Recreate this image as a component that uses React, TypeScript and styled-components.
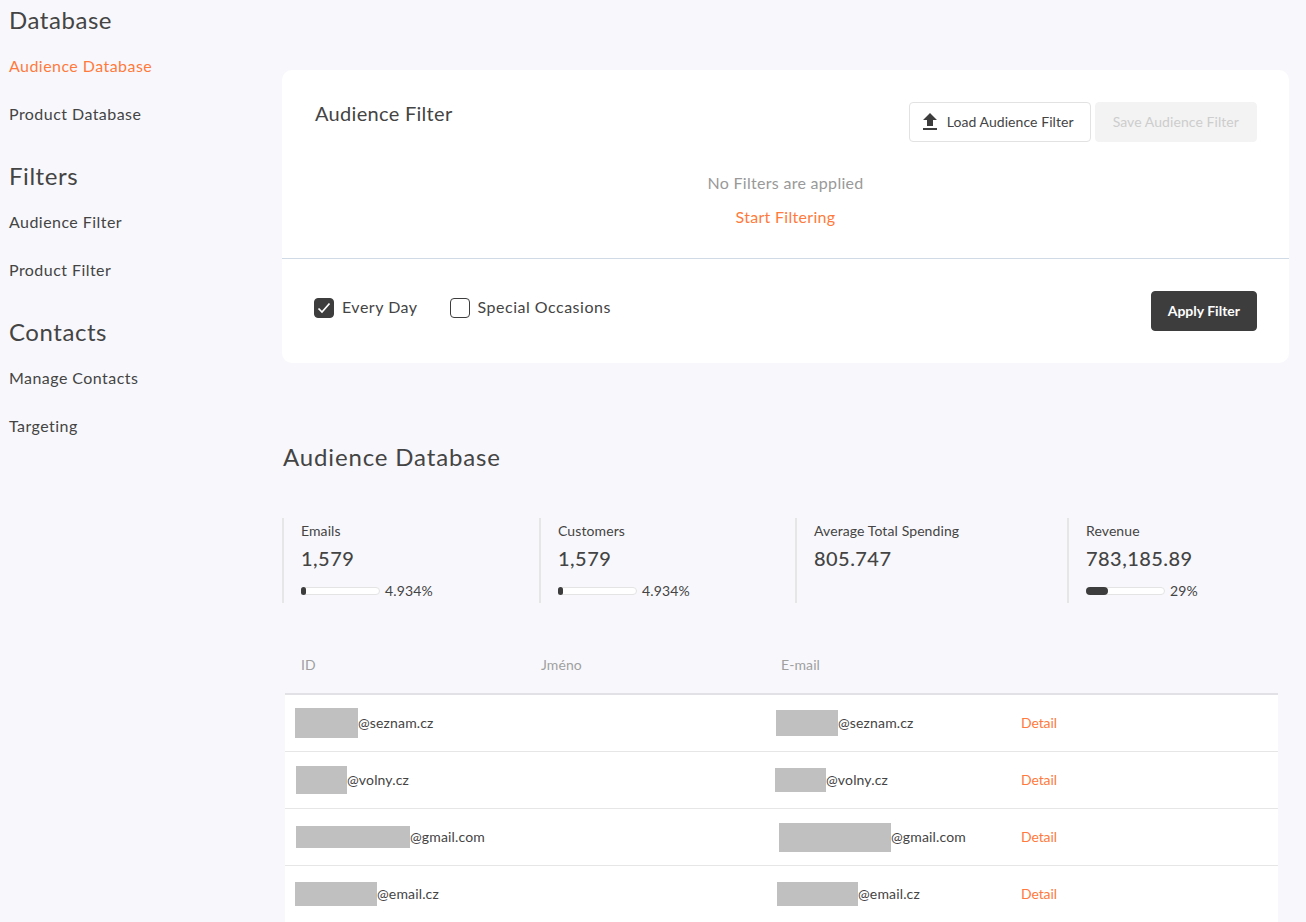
import React from "react";
import styled, { createGlobalStyle } from "styled-components";
import { MdFileUpload } from "react-icons/md";

const GlobalStyle = createGlobalStyle`
  html, body {
    margin: 0;
    padding: 0;
    background: #f8f8fc;
    overflow: hidden;
  }
  body {
    font-family: "Lato", "Open Sans", sans-serif;
    color: #444;
  }
`;

const orange = "#ff7a3c";

const Shell = styled.div`
  display: grid;
  grid-template-columns: 282px 1fr;
  height: 922px;
  overflow: hidden;
`;

const Sidebar = styled.nav`
  padding-left: 9px;
  display: flex;
  flex-direction: column;
  gap: 18px;
`;

const NavGroup = styled.div`
  display: flex;
  flex-direction: column;
`;

const NavTitle = styled.h3`
  margin: 0;
  height: 42px;
  line-height: 40px;
  font-size: 24px;
  font-weight: 400;
  letter-spacing: 0.55px;
  color: #444;
`;

const NavItem = styled.a<{ $active?: boolean }>`
  height: 48px;
  line-height: 48px;
  font-size: 16px;
  letter-spacing: 0.45px;
  color: ${({ $active }) => ($active ? orange : "#444")};
`;

const Main = styled.main`
  padding: 70px 17px 0 0;
`;

const Card = styled.section`
  background: #fff;
  border-radius: 10px;
`;

const CardTop = styled.div`
  padding: 32px 32px 29px;
  border-bottom: 1px solid #cfdae6;
`;

const CardHeader = styled.div`
  display: flex;
  justify-content: space-between;
  align-items: flex-start;
`;

const CardTitle = styled.h2`
  margin: 0 0 0 1px;
  font-size: 20px;
  line-height: 22px;
  font-weight: 400;
  letter-spacing: 0.3px;
  color: #444;
`;

const ButtonRow = styled.div`
  display: flex;
  gap: 4px;
`;

const Button = styled.button<{ $kind?: "outline" | "disabled" | "dark" }>`
  display: flex;
  align-items: center;
  justify-content: center;
  gap: 5px;
  height: 40px;
  box-sizing: border-box;
  border-radius: 4px;
  font-family: inherit;
  font-size: 14px;
  letter-spacing: 0.07px;
  padding: 0 16px 2px;
  border: 1px solid
    ${({ $kind }) =>
      $kind === "outline" ? "#e2e2e2" : $kind === "dark" ? "#3d3d3d" : "#f3f3f3"};
  background: ${({ $kind }) =>
    $kind === "outline" ? "#fff" : $kind === "dark" ? "#3d3d3d" : "#f3f3f3"};
  color: ${({ $kind }) =>
    $kind === "outline" ? "#444" : $kind === "dark" ? "#fff" : "#cdcdcd"};
  font-weight: ${({ $kind }) => ($kind === "dark" ? 700 : 400)};
`;

const IconButton = styled(Button)`
  padding-left: 8px;

  svg {
    margin-top: 2px;
  }
`;

const SaveButton = styled(Button)`
  padding: 0 17px 2px;
`;

const ApplyButton = styled(Button)`
  letter-spacing: 0;
`;

const EmptyState = styled.div`
  margin-top: 29px;
  display: flex;
  flex-direction: column;
  align-items: center;
  gap: 10px;
  font-size: 16px;
  line-height: 24px;
  letter-spacing: 0.3px;
`;

const EmptyText = styled.span`
  color: #999;
`;

const EmptyLink = styled.a`
  color: ${orange};
`;

const CardFooter = styled.div`
  display: flex;
  align-items: flex-start;
  justify-content: space-between;
  padding: 32px;
`;

const Checks = styled.div`
  display: flex;
  gap: 32px;
  padding-top: 6px;
`;

const CheckLabel = styled.label`
  display: flex;
  align-items: center;
  gap: 8px;
  font-size: 16px;
  letter-spacing: 0.5px;
  color: #444;
`;

const CheckText = styled.span`
  margin-bottom: 2px;
`;

const CheckBox = styled.span<{ $checked?: boolean }>`
  display: flex;
  align-items: center;
  justify-content: center;
  width: 20px;
  height: 20px;
  box-sizing: border-box;
  border-radius: 4px;
  border: 1px solid #3d3d3d;
  background: ${({ $checked }) => ($checked ? "#3d3d3d" : "#fff")};
`;

const SectionTitle = styled.h2`
  margin: 79px 0 46px 1px;
  font-size: 24px;
  line-height: 30px;
  font-weight: 400;
  letter-spacing: 0.85px;
  color: #444;
`;

const Stats = styled.div`
  display: grid;
  grid-template-columns: 257px 256px 272px 1fr;
`;

const Stat = styled.div`
  height: 85px;
  box-sizing: border-box;
  border-left: 2px solid #e6e6e6;
  padding: 4px 0 0 17px;
`;

const StatLabel = styled.div`
  font-size: 14px;
  line-height: 18px;
  letter-spacing: 0.1px;
  color: #444;
`;

const StatValue = styled.div`
  margin-top: 5px;
  font-size: 20px;
  line-height: 26px;
  font-weight: 500;
  letter-spacing: 0.45px;
  color: #444;
`;

const ProgressRow = styled.div`
  margin-top: 11px;
  display: flex;
  align-items: center;
  gap: 5px;
  font-size: 14px;
  line-height: 18px;
  letter-spacing: 0.12px;
  color: #444;
`;

const Track = styled.div`
  width: 79px;
  height: 8px;
  box-sizing: border-box;
  background: #fff;
  border: 1px solid #e4e4e4;
  border-radius: 4px;
`;

const Fill = styled.div`
  height: 8px;
  margin: -1px 0 0 -1px;
  min-width: 5px;
  background: #3d3d3d;
  border-radius: 4px;
`;

const Table = styled.div`
  margin: 35px 11px 0 3px;
`;

const TableHead = styled.div`
  display: grid;
  grid-template-columns: repeat(4, 240px) 1fr;
  height: 57px;
  padding-bottom: 3px;
  box-sizing: border-box;
  align-items: center;
  border-bottom: 2px solid #e2e2e6;
`;

const HeadCell = styled.div`
  padding: 0 16px;
  font-size: 14px;
  letter-spacing: 0.1px;
  color: #a0a0a0;
`;

const TableRow = styled.div`
  display: grid;
  grid-template-columns: repeat(4, 240px) 1fr;
  height: 57px;
  box-sizing: border-box;
  align-items: center;
  background: #fff;
  border-bottom: 1px solid #e6e6e6;
`;

const Cell = styled.div`
  display: flex;
  align-items: center;
  padding: 0 16px;
  font-size: 14px;
  letter-spacing: 0.15px;
  color: #444;
`;

const Redacted = styled.span<{ $w: number; $h: number; $shift: number }>`
  flex: none;
  width: ${({ $w }) => $w}px;
  height: ${({ $h }) => $h}px;
  margin-left: ${({ $shift }) => $shift}px;
  background: #c0c0c0;
`;

const Domain = styled.span`
  margin-bottom: 2px;
`;

const DetailLink = styled.a`
  margin-bottom: 2px;
  font-size: 14px;
  letter-spacing: -0.1px;
  color: ${orange};
`;

const stats = [
  { label: "Emails", value: "1,579", pct: 4.934, text: "4.934%" },
  { label: "Customers", value: "1,579", pct: 4.934, text: "4.934%" },
  { label: "Average Total Spending", value: "805.747" },
  { label: "Revenue", value: "783,185.89", pct: 29, text: "29%" },
];

const rows = [
  { domain: "@seznam.cz", id: [63, 30, -6], mail: [62, 26, -5] },
  { domain: "@volny.cz", id: [51, 28, -5], mail: [51, 24, -6] },
  { domain: "@gmail.com", id: [114, 22, -5], mail: [112, 29, -2] },
  { domain: "@email.cz", id: [82, 24, -6], mail: [81, 24, -4] },
];

const navigation = [
  { title: "Database", items: ["Audience Database", "Product Database"] },
  { title: "Filters", items: ["Audience Filter", "Product Filter"] },
  { title: "Contacts", items: ["Manage Contacts", "Targeting"] },
];

const App: React.FC = () => {
  return (
    <Shell>
      <GlobalStyle />
      <Sidebar>
        {navigation.map((group) => (
          <NavGroup key={group.title}>
            <NavTitle>{group.title}</NavTitle>
            {group.items.map((item) => (
              <NavItem key={item} $active={item === "Audience Database"}>
                {item}
              </NavItem>
            ))}
          </NavGroup>
        ))}
      </Sidebar>
      <Main>
        <Card>
          <CardTop>
            <CardHeader>
              <CardTitle>Audience Filter</CardTitle>
              <ButtonRow>
                <IconButton $kind="outline">
                  <MdFileUpload size={24} color="#3d3d3d" />
                  Load Audience Filter
                </IconButton>
                <SaveButton $kind="disabled">Save Audience Filter</SaveButton>
              </ButtonRow>
            </CardHeader>
            <EmptyState>
              <EmptyText>No Filters are applied</EmptyText>
              <EmptyLink>Start Filtering</EmptyLink>
            </EmptyState>
          </CardTop>
          <CardFooter>
            <Checks>
              <CheckLabel>
                <CheckBox $checked>
                  <svg width="14" height="12" viewBox="0 0 14 12" fill="none">
                    <path d="M1.5 6.5 5 10l7.5-8.5" stroke="#fff" strokeWidth="1.7" />
                  </svg>
                </CheckBox>
                <CheckText>Every Day</CheckText>
              </CheckLabel>
              <CheckLabel>
                <CheckBox />
                <CheckText>Special Occasions</CheckText>
              </CheckLabel>
            </Checks>
            <ApplyButton $kind="dark">Apply Filter</ApplyButton>
          </CardFooter>
        </Card>

        <SectionTitle>Audience Database</SectionTitle>

        <Stats>
          {stats.map((s) => (
            <Stat key={s.label}>
              <StatLabel>{s.label}</StatLabel>
              <StatValue>{s.value}</StatValue>
              {s.pct !== undefined && (
                <ProgressRow>
                  <Track>
                    <Fill style={{ width: `${s.pct}%` }} />
                  </Track>
                  {s.text}
                </ProgressRow>
              )}
            </Stat>
          ))}
        </Stats>

        <Table>
          <TableHead>
            <HeadCell>ID</HeadCell>
            <HeadCell>Jméno</HeadCell>
            <HeadCell>E-mail</HeadCell>
          </TableHead>
          {rows.map((r) => (
            <TableRow key={r.domain}>
              <Cell>
                <Redacted $w={r.id[0]} $h={r.id[1]} $shift={r.id[2]} />
                <Domain>{r.domain}</Domain>
              </Cell>
              <Cell />
              <Cell>
                <Redacted $w={r.mail[0]} $h={r.mail[1]} $shift={r.mail[2]} />
                <Domain>{r.domain}</Domain>
              </Cell>
              <Cell>
                <DetailLink>Detail</DetailLink>
              </Cell>
            </TableRow>
          ))}
        </Table>
      </Main>
    </Shell>
  );
};

export default App;
